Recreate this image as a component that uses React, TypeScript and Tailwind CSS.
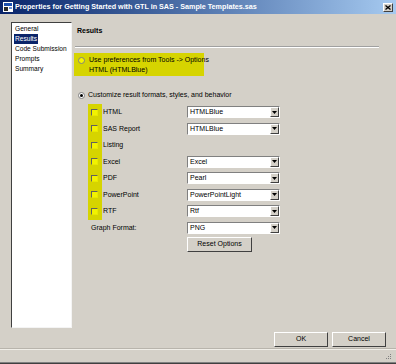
import React from 'react';

const font = { fontFamily: '"Liberation Sans", Arial, sans-serif' };

const Dropdown: React.FC<{ value: string }> = ({ value }) => (
  <div className="flex h-[12px] w-[93px] border-t border-l border-t-[#808080] border-l-[#808080] border-b border-r border-b-white border-r-white bg-white">
    <div className="flex-1 truncate pl-[2px] text-[7px] leading-[10px] text-black">{value}</div>
    <div className="flex h-[10px] w-[9px] items-center justify-center border-t border-l border-t-white border-l-white border-b border-r border-b-[#404040] border-r-[#404040] bg-[#d4d0c8]">
      <svg width="5" height="3" viewBox="0 0 5 3">
        <path d="M0 0h5L2.5 3z" fill="#000" />
      </svg>
    </div>
  </div>
);

const Checkbox: React.FC = () => (
  <div className="h-[7px] w-[7px] border-t border-l border-t-[#606060] border-l-[#606060] border-b border-r border-b-[#e8e800] border-r-[#e8e800] bg-[#f2f200]" />
);

const Button: React.FC<{ label: string; w: string }> = ({ label, w }) => (
  <div
    className={`flex h-[15px] ${w} items-center justify-center border-t border-l border-t-white border-l-white border-b border-r border-b-[#404040] border-r-[#404040] bg-[#d4d0c8] text-[7px] text-black`}
  >
    {label}
  </div>
);

const rows: { label: string; value?: string }[] = [
  { label: 'HTML', value: 'HTMLBlue' },
  { label: 'SAS Report', value: 'HTMLBlue' },
  { label: 'Listing' },
  { label: 'Excel', value: 'Excel' },
  { label: 'PDF', value: 'Pearl' },
  { label: 'PowerPoint', value: 'PowerPointLight' },
  { label: 'RTF', value: 'Rtf' },
];

const App: React.FC = () => {
  return (
    <div className="relative flex h-[364px] w-[396px] flex-col overflow-hidden bg-[#d4d0c8] text-black" style={font}>
      {/* title bar */}
      <div className="flex h-[14px] items-center bg-gradient-to-r from-[#0a246a] to-[#a6caf0] pl-[3px] pr-[3px]">
        <svg width="10" height="10" viewBox="0 0 10 10" className="shrink-0">
          <rect x="0" y="0" width="10" height="10" fill="#ffffff" />
          <rect x="1" y="1" width="8" height="3" fill="#1c4fb0" />
          <rect x="1" y="5" width="4" height="4" fill="#2a2a2a" />
          <rect x="6" y="5" width="3" height="2" fill="#6b8fd8" />
        </svg>
        <div className="ml-[2px] flex-1 truncate text-[7.2px] font-bold leading-[14px] text-white">
          Properties for Getting Started with GTL in SAS - Sample Templates.sas
        </div>
        <div className="flex h-[9px] w-[10px] items-center justify-center border-t border-l border-t-white border-l-white border-b border-r border-b-[#404040] border-r-[#404040] bg-[#d4d0c8]">
          <svg width="6" height="5" viewBox="0 0 6 5">
            <path d="M0.5 0.5L5.5 4.5M5.5 0.5L0.5 4.5" stroke="#000" strokeWidth="1.3" />
          </svg>
        </div>
      </div>

      {/* body */}
      <div className="flex h-[315px] pl-[11px]">
        {/* nav list */}
        <div className="mt-[8px] h-[306px] w-[61px] border-t border-l border-t-[#404040] border-l-[#404040] border-b border-r border-b-[#f4f4f4] border-r-[#f4f4f4] bg-white pt-[1px] pl-[2px] text-[6.6px] leading-[10px]">
          <div className="px-[1px]">General</div>
          <div>
            <span className="inline-block bg-[#0a246a] px-[1px] text-white">Results</span>
          </div>
          <div className="px-[1px]">Code Submission</div>
          <div className="px-[1px]">Prompts</div>
          <div className="px-[1px]">Summary</div>
        </div>

        {/* panel */}
        <div className="ml-[3px] flex w-[304px] flex-col">
          <div className="mt-[12px] pl-[2px] text-[7px] font-bold leading-[10px]">Results</div>
          <div className="mt-[10px] h-[2px] border-t border-t-[#a0a0a0] border-b border-b-white" />

          <div className="mt-[5px] h-[23px] w-[130px] -ml-[1px] bg-[#d6d400] pt-[2px] pl-[4px]">
            <div className="flex items-center gap-[4px] whitespace-nowrap">
              <div className="h-[7px] w-[7px] shrink-0 rounded-full border border-[#808080] bg-[#f6f600]" />
              <span className="text-[7px] leading-[10px]">Use preferences from Tools -&gt; Options</span>
            </div>
            <div className="pl-[11px] text-[7px] leading-[10px]">HTML (HTMLBlue)</div>
          </div>

          <div className="mt-[14px] flex items-center gap-[3px] pl-[3px]">
            <div className="flex h-[7px] w-[7px] items-center justify-center rounded-full border border-[#808080] bg-white">
              <div className="h-[3px] w-[3px] rounded-full bg-black" />
            </div>
            <span className="text-[7px] leading-[10px]">Customize result formats, styles, and behavior</span>
          </div>

          <div className="mt-[4px] flex flex-col pl-[13px]">
            {rows.map((r) => (
              <div key={r.label} className="flex h-[16.5px] items-center">
                <div className="flex h-full w-[14px] items-center bg-[#d6d400] pl-[3px]">
                  <Checkbox />
                </div>
                <div className="w-[85px] pl-[1px] text-[7px] leading-[10px]">{r.label}</div>
                {r.value && <Dropdown value={r.value} />}
              </div>
            ))}
            <div className="flex h-[16.5px] items-center">
              <div className="w-[99px] pl-[3px] text-[7px] leading-[10px]">Graph Format:</div>
              <Dropdown value="PNG" />
            </div>
            <div className="mt-[1px] flex pl-[99px]">
              <Button label="Reset Options" w="w-[65px] h-[13px]" />
            </div>
          </div>
        </div>
      </div>

      {/* buttons */}
      <div className="mt-[3px] flex justify-end gap-[4px] pr-[10px]">
        <Button label="OK" w="w-[54px]" />
        <Button label="Cancel" w="w-[54px]" />
      </div>

      {/* status bar */}
      <div className="mt-[1px] h-[2px] border-t border-t-[#b8b4ac] border-b border-b-[#f0eee8]" />
      <div className="relative h-[12px]">
        <svg width="6" height="6" viewBox="0 0 6 6" className="absolute right-[4px] bottom-[2px]">
          <rect x="4" y="0" width="1" height="1" fill="#808080" />
          <rect x="2" y="2" width="1" height="1" fill="#808080" />
          <rect x="4" y="2" width="1" height="1" fill="#808080" />
          <rect x="0" y="4" width="1" height="1" fill="#808080" />
          <rect x="2" y="4" width="1" height="1" fill="#808080" />
          <rect x="4" y="4" width="1" height="1" fill="#808080" />
        </svg>
      </div>
      <div className="h-[1px] bg-[#808080]" />
      <div className="h-[1px] bg-[#404040]" />
    </div>
  );
};

export default App;
